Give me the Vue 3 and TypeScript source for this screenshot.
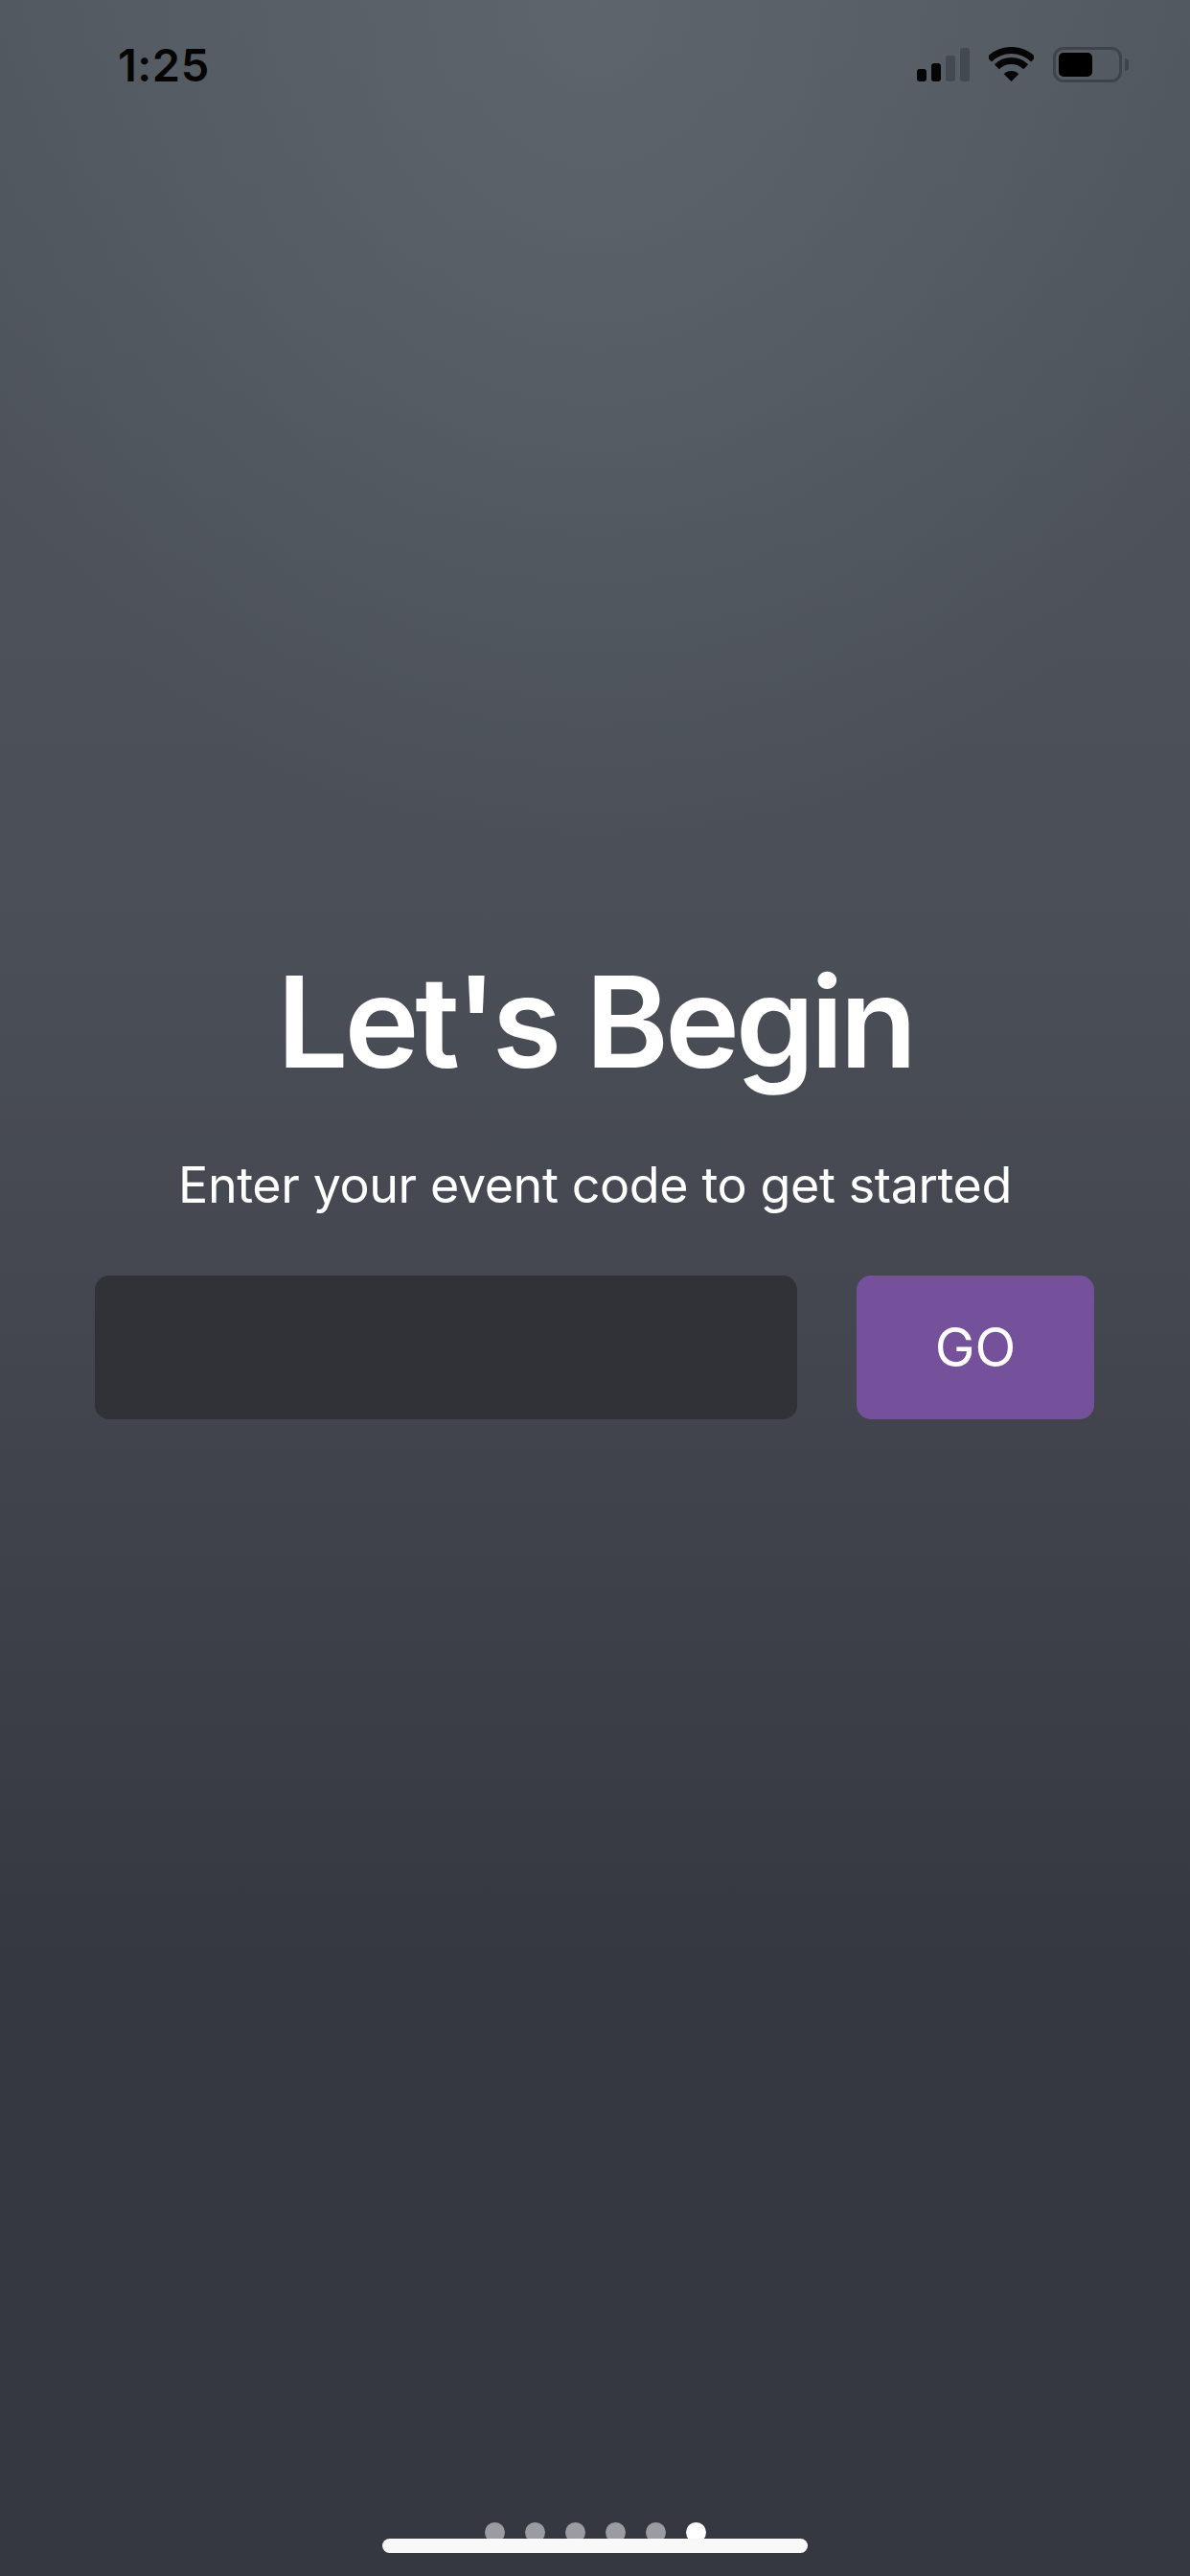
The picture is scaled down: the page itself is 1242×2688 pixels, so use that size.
<script setup lang="ts">
const dots = [false, false, false, false, false, true]
</script>

<template>
  <div class="page">
    <header class="status">
      <span class="time">1:25</span>
      <div class="icons">
        <svg class="signal" width="55" height="35" viewBox="0 0 55 35">
          <rect x="0" y="22" width="10" height="13" rx="3" fill="#050505" />
          <rect x="15" y="16" width="10" height="19" rx="3" fill="#050505" />
          <rect x="30" y="8" width="10" height="27" rx="3" fill="#444851" />
          <rect x="45" y="0" width="10" height="35" rx="3" fill="#444851" />
        </svg>
        <svg class="wifi" width="47" height="36" viewBox="0 0 47 36">
          <path d="M0.5 13 A32.5 32.5 0 0 1 46.5 13" fill="none" stroke="#050505" stroke-width="7" />
          <path d="M8.3 20.8 A21.5 21.5 0 0 1 38.7 20.8" fill="none" stroke="#050505" stroke-width="7" />
          <path d="M23.5 36 L15.7 28.2 A11 11 0 0 1 31.3 28.2 Z" fill="#050505" />
        </svg>
        <div class="battery">
          <div class="battery-body">
            <div class="battery-fill"></div>
          </div>
          <div class="battery-cap"></div>
        </div>
      </div>
    </header>

    <main class="main">
      <h1 class="title">Let's Begin</h1>
      <p class="subtitle">Enter your event code to get started</p>
      <div class="form">
        <div class="code-input"></div>
        <div class="go">GO</div>
      </div>
    </main>

    <div class="dots">
      <span v-for="(on, i) in dots" :key="i" class="dot" :class="{ on }"></span>
    </div>
    <div class="home-bar"></div>
  </div>
</template>

<style>
html,
body {
  margin: 0;
  background: #363841;
}
</style>

<style scoped>
.page {
  position: relative;
  box-sizing: border-box;
  width: 1242px;
  height: 2688px;
  display: flex;
  flex-direction: column;
  overflow: hidden;
  font-family: Inter, "Liberation Sans", sans-serif;
  color: #fff;
  background:
    radial-gradient(ellipse 760px 900px at 620px 0, rgba(98, 107, 113, 0.75), rgba(98, 107, 113, 0) 100%),
    linear-gradient(180deg, #50565e 0, #4a4e57 1000px, #42454d 1450px, #363841 2050px, #363841 100%);
}
.status {
  box-sizing: border-box;
  height: 136px;
  padding: 49px 64px 0 123px;
  display: flex;
  justify-content: space-between;
  align-items: flex-start;
}
.time {
  font-size: 47px;
  line-height: 37px;
  font-weight: 600;
  letter-spacing: 0.5px;
  color: #050505;
}
.icons {
  display: flex;
  align-items: flex-start;
}
.signal {
  margin-top: 1px;
  margin-right: 20px;
}
.wifi {
  margin-right: 20px;
}
.battery {
  display: flex;
  align-items: center;
}
.battery-body {
  box-sizing: border-box;
  width: 72px;
  height: 37px;
  border: 3px solid #3f434b;
  border-radius: 11px;
  padding: 3px;
}
.battery-fill {
  width: 35px;
  height: 25px;
  border-radius: 5px;
  background: #000;
}
.battery-cap {
  width: 4px;
  height: 13px;
  margin-left: 3px;
  border-radius: 0 5px 5px 0;
  background: #3f434b;
}
.main {
  display: flex;
  flex-direction: column;
  align-items: center;
  padding-top: 850px;
}
.title {
  margin: 0;
  font-size: 132px;
  line-height: 160px;
  font-weight: 600;
  letter-spacing: -4.2px;
  color: #fff;
}
.subtitle {
  margin: 61px 0 0;
  font-size: 52px;
  line-height: 60px;
  font-weight: 400;
  letter-spacing: -0.4px;
  color: #fff;
}
.form {
  align-self: stretch;
  margin: 64px 100px 0 99px;
  display: flex;
  gap: 62px;
}
.code-input {
  flex: 1;
  height: 150px;
  border-radius: 15px;
  background: #303237;
}
.go {
  width: 248px;
  height: 150px;
  border-radius: 15px;
  background: #74519a;
  display: flex;
  align-items: center;
  justify-content: center;
  font-size: 56px;
  font-weight: 400;
}
.dots {
  margin-top: auto;
  margin-bottom: 35px;
  display: flex;
  justify-content: center;
  gap: 21px;
}
.dot {
  width: 21px;
  height: 21px;
  border-radius: 50%;
  background: #9b9ca1;
}
.dot.on {
  background: #fff;
}
.home-bar {
  position: absolute;
  left: 399px;
  top: 2649px;
  width: 444px;
  height: 15px;
  border-radius: 8px;
  background: #f8f8f8;
}
</style>
